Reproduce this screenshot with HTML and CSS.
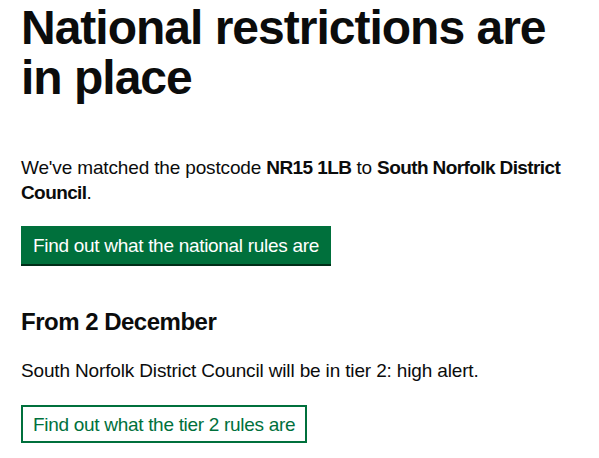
FILE: index.html
```html
<!DOCTYPE html>
<html lang="en">
<head>
<meta charset="utf-8">
<title>National restrictions are in place</title>
<link rel="stylesheet" href="styles.css">
</head>
<body>
<main class="page">
  <h1 class="heading-xl">National restrictions are in place</h1>
  <p class="body">We've matched the postcode <strong>NR15 1LB</strong> to <strong>South Norfolk District Council</strong>.</p>
  <a class="button button-primary" href="#">Find out what the national rules are</a>
  <h2 class="heading-m">From 2 December</h2>
  <p class="body">South Norfolk District Council will be in tier 2: high alert.</p>
  <a class="button button-outline" href="#">Find out what the tier 2 rules are</a>
</main>
</body>
</html>
```
FILE: styles.css
```css
* { box-sizing: border-box; }
html, body { margin: 0; padding: 0; background: #fff; }
body {
  font-family: "Liberation Sans", Arial, sans-serif;
  color: #0b0c0c;
  -webkit-font-smoothing: antialiased;
}
.page {
  display: flex;
  flex-direction: column;
  align-items: flex-start;
  padding: 3px 21px 0;
}
.heading-xl {
  font-size: 48px;
  line-height: 50px;
  font-weight: 700;
  letter-spacing: -1px;
  margin: 0 0 52px;
}
.body {
  font-size: 19px;
  line-height: 25px;
  letter-spacing: -0.15px;
  margin: 0 0 21px;
}
.body strong {
  font-weight: 700;
  letter-spacing: -0.6px;
}
.heading-m {
  font-size: 24px;
  line-height: 30px;
  font-weight: 700;
  letter-spacing: -0.5px;
  margin: 0 0 21px;
}
.button {
  display: inline-block;
  font-size: 19px;
  line-height: 19px;
  letter-spacing: -0.3px;
  text-decoration: none;
  padding: 8px 10px 7px;
}
.button-primary {
  background: #00703c;
  color: #fff;
  border: 2px solid transparent;
  box-shadow: 0 2px 0 #002d18;
  margin-bottom: 43px;
}
.button-outline {
  background: #fff;
  color: #00703c;
  border: 2px solid #00703c;
  margin-top: 1px;
}
```
